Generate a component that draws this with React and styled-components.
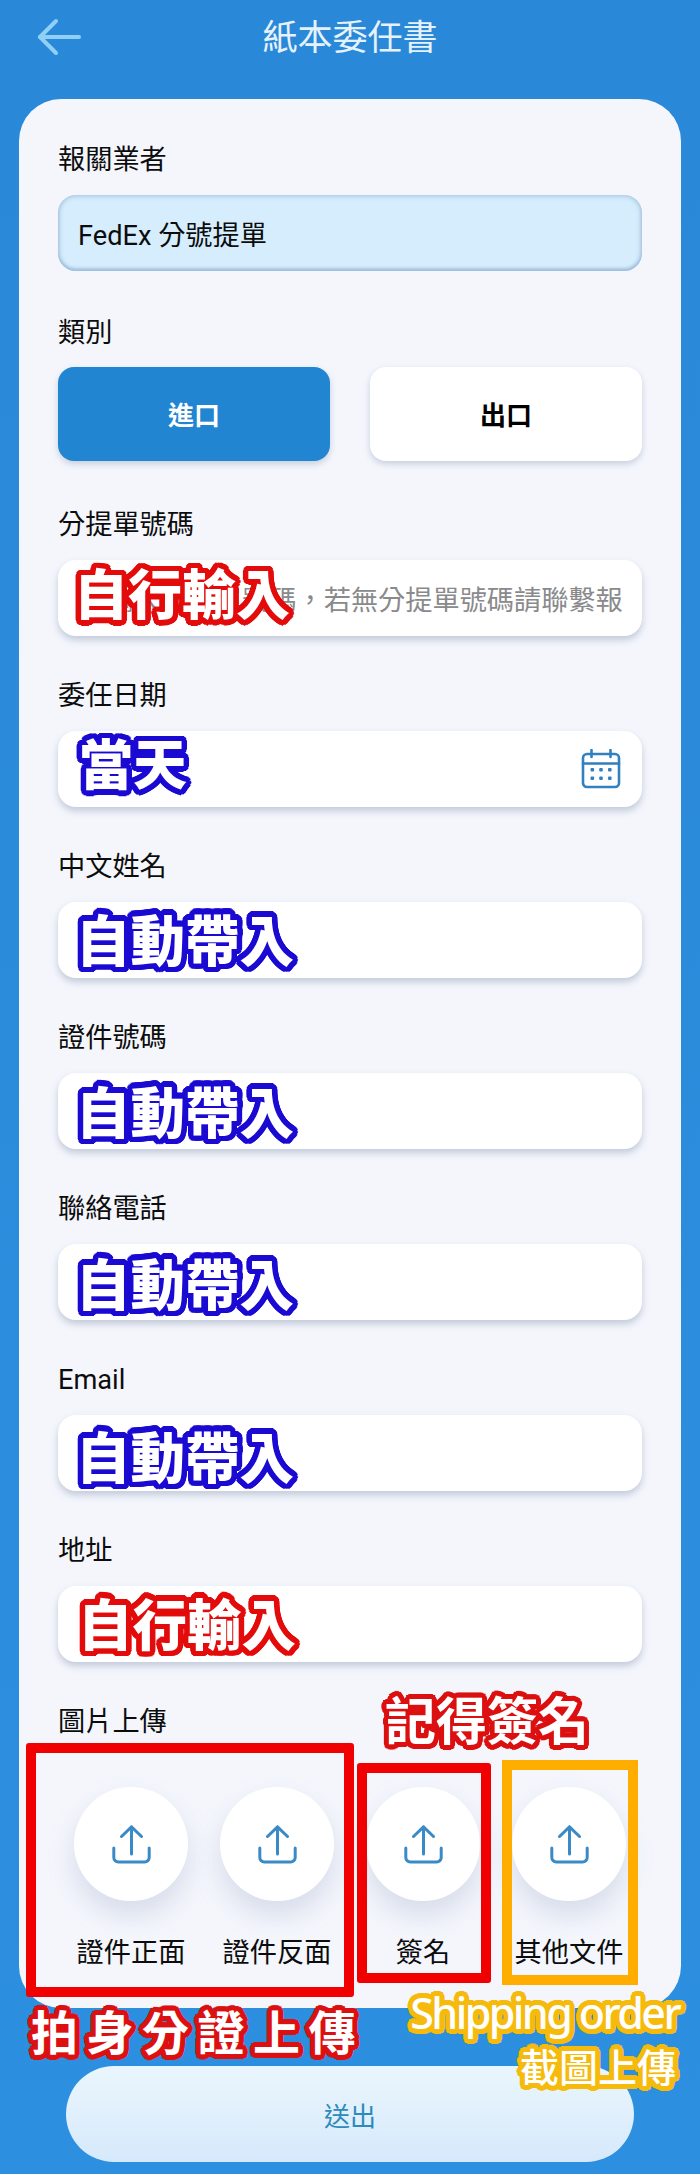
import React from "react";
import styled, { createGlobalStyle } from "styled-components";

const GlobalStyle = createGlobalStyle`
	html, body {
		margin: 0;
		padding: 0;
		background: #2a8adb;
	}
	* {
		box-sizing: border-box;
	}
`;

// rounded outline round a text, -webkit-text-stroke leaves sharp spikes on the corners
const outline = (color, radius) => {
	const shadows = [];
	for (let r = radius; r > 0; r -= 2) {
		for (let i = 0; i < 24; i++) {
			const a = (i / 24) * Math.PI * 2;
			shadows.push(`${(Math.cos(a) * r).toFixed(2)}px ${(Math.sin(a) * r).toFixed(2)}px 0 ${color}`);
		}
	}
	return shadows.join(",");
};

const UploadIcon = () => (
	<svg width="39" height="39" viewBox="0 0 39 39" fill="none" stroke="#3a8ac8" strokeWidth="3" strokeLinecap="round" strokeLinejoin="round">
		<path d="M19.5 29V2" />
		<path d="M9.5 11.5L19.5 1.8L29.5 11.5" />
		<path d="M1.8 23v9.5a4.5 4.5 0 0 0 4.5 4.5h26.4a4.5 4.5 0 0 0 4.5-4.5V23" />
	</svg>
);

const CalendarIcon = () => (
	<svg width="40" height="40" viewBox="0 0 40 40" fill="none" stroke="#3180bf" strokeWidth="2.6" strokeLinecap="round">
		<rect x="2" y="5" width="36" height="33" rx="4" />
		<path d="M2 14.5h36" />
		<path d="M10.5 1v7M29.5 1v7" />
		<g fill="#3180bf" stroke="none">
			<rect x="9.5" y="19" width="3.6" height="3.6" rx="1" />
			<rect x="18.2" y="19" width="3.6" height="3.6" rx="1" />
			<rect x="27" y="19" width="3.6" height="3.6" rx="1" />
			<rect x="9.5" y="27.5" width="3.6" height="3.6" rx="1" />
			<rect x="18.2" y="27.5" width="3.6" height="3.6" rx="1" />
			<rect x="27" y="27.5" width="3.6" height="3.6" rx="1" />
		</g>
	</svg>
);

const App = () => {
	return (
		<Page>
			<GlobalStyle />
			<Header>
				<BackButton>
					<svg width="44" height="38" viewBox="0 0 44 38" fill="none" stroke="#90d0f6" strokeWidth="4" strokeLinecap="round" strokeLinejoin="round">
						<path d="M3 19h39" />
						<path d="M19 3L3 19L19 35" />
					</svg>
				</BackButton>
				<Title>紙本委任書</Title>
			</Header>
			<Card>
				<Field $gap={41}>
					<Label>報關業者</Label>
					<SelectBox>FedEx 分號提單</SelectBox>
				</Field>
				<Field $gap={43}>
					<Label $tight>類別</Label>
					<TypeRow>
						<TypeButton $active>進口</TypeButton>
						<TypeButton>出口</TypeButton>
					</TypeRow>
				</Field>
				<Field>
					<Label>分提單號碼</Label>
					<InputBox $muted>
						請輸入分提單號碼，若無分提單號碼請聯繫報
						<Stamp $color="#e30b0b" $x={16} $y={-1} $size={54}>自行輸入</Stamp>
					</InputBox>
				</Field>
				<Field>
					<Label>委任日期</Label>
					<InputBox>
						<Stamp $color="#1a0ad2" $size={54} $x={21} $y={-2}>當天</Stamp>
						<CalendarSlot><CalendarIcon /></CalendarSlot>
					</InputBox>
				</Field>
				<Field>
					<Label>中文姓名</Label>
					<InputBox><Stamp $color="#1a0ad2" $y={2}>自動帶入</Stamp></InputBox>
				</Field>
				<Field>
					<Label>證件號碼</Label>
					<InputBox><Stamp $color="#1a0ad2" $y={3}>自動帶入</Stamp></InputBox>
				</Field>
				<Field>
					<Label>聯絡電話</Label>
					<InputBox><Stamp $color="#1a0ad2" $y={4}>自動帶入</Stamp></InputBox>
				</Field>
				<Field>
					<Label>Email</Label>
					<InputBox><Stamp $color="#1a0ad2" $y={6}>自動帶入</Stamp></InputBox>
				</Field>
				<Field>
					<Label>地址</Label>
					<InputBox><Stamp $color="#e30b0b" $x={20} $y={2}>自行輸入</Stamp></InputBox>
				</Field>
				<Label>圖片上傳</Label>
				<UploadGrid>
					<UploadItem>
						<UploadCircle><UploadIcon /></UploadCircle>
						<UploadName>證件正面</UploadName>
					</UploadItem>
					<UploadItem>
						<UploadCircle><UploadIcon /></UploadCircle>
						<UploadName>證件反面</UploadName>
					</UploadItem>
					<UploadItem>
						<UploadCircle><UploadIcon /></UploadCircle>
						<UploadName>簽名</UploadName>
					</UploadItem>
					<UploadItem>
						<UploadCircle><UploadIcon /></UploadCircle>
						<UploadName>其他文件</UploadName>
					</UploadItem>
				</UploadGrid>
			</Card>
			<SubmitButton>送出</SubmitButton>

			<IdFrame />
			<SignFrame />
			<OrderFrame />
			<SignNote>記得簽名</SignNote>
			<IdNote>拍身分證上傳</IdNote>
			<OrderNote>Shipping order</OrderNote>
			<ShotNote>截圖上傳</ShotNote>
		</Page>
	);
};

const Page = styled.div`
	position: relative;
	width: 700px;
	height: 2174px;
	overflow: hidden;
	background: linear-gradient(#2a88d8, #2d8fe0);
	font-family: Roboto, "Noto Sans CJK TC", sans-serif;
	color: #0c0c0c;
`;

const Header = styled.header`
	position: relative;
	height: 99px;
	display: flex;
	justify-content: center;
	padding-top: 14px;
`;

const BackButton = styled.div`
	position: absolute;
	left: 37px;
	top: 18px;
	line-height: 0;
`;

const Title = styled.h1`
	margin: 0;
	font-size: 35px;
	line-height: 50px;
	font-weight: 400;
	color: #e6f2fb;
`;

const Card = styled.main`
	margin: 0 19px;
	padding: 40px 39px 37px;
	height: 1909px;
	background: #f4f6fc;
	border-radius: 42px;
`;

const Field = styled.section`
	margin-bottom: ${(p) => p.$gap ?? 39}px;
`;

const Label = styled.div`
	font-size: 27.2px;
	line-height: 38px;
	padding-top: 2px;
	height: 38px;
	margin-bottom: ${(p) => (p.$tight ? 17 : 18)}px;
`;

const InputBox = styled.div`
	position: relative;
	height: 76px;
	padding: 0 21px;
	display: flex;
	align-items: center;
	font-size: 27.2px;
	white-space: nowrap;
	background: #fff;
	border-radius: 18px;
	color: ${(p) => (p.$muted ? "#8a8a8c" : "#0c0c0c")};
	box-shadow: 0 4px 7px rgba(120, 135, 165, 0.4);
`;

const SelectBox = styled(InputBox)`
	padding: 0 20px;
	background: #d6edfd;
	color: #0c0c0c;
	box-shadow: inset 0 0 5px 1px #a2c2de, inset 0 -2px 3px #9dbbd8;
`;

const Stamp = styled.span`
	position: absolute;
	left: ${(p) => p.$x ?? 18}px;
	top: calc(50% + ${(p) => p.$y ?? 0}px);
	transform: translateY(-50%);
	font-size: ${(p) => p.$size ?? 54.5}px;
	line-height: 1;
	font-weight: 900;
	color: #fff;
	text-shadow: ${(p) => outline(p.$color, 5.5)};
`;

const CalendarSlot = styled.div`
	margin-left: auto;
	line-height: 0;
`;

const TypeRow = styled.div`
	display: grid;
	grid-template-columns: 272px 272px;
	justify-content: space-between;
`;

const TypeButton = styled.button`
	height: 94px;
	padding: 0 0 2px;
	border: 0;
	border-radius: 16px;
	font-family: inherit;
	font-size: 26px;
	font-weight: 700;
	background: ${(p) => (p.$active ? "#2285d2" : "#fff")};
	color: ${(p) => (p.$active ? "#fff" : "#000")};
	box-shadow: 0 3px 6px rgba(120, 135, 165, 0.35);
`;

const UploadGrid = styled.div`
	display: grid;
	grid-template-columns: repeat(4, 1fr);
	margin-top: 48px;
`;

const UploadItem = styled.div`
	display: flex;
	flex-direction: column;
	align-items: center;
	gap: 33px;
`;

const UploadCircle = styled.div`
	width: 114px;
	height: 114px;
	border-radius: 50%;
	background: #fff;
	display: flex;
	align-items: center;
	justify-content: center;
	box-shadow: 0 14px 26px rgba(140, 155, 190, 0.28);
`;

const UploadName = styled.div`
	font-size: 27.2px;
	line-height: 38px;
	white-space: nowrap;
`;

const SubmitButton = styled.button`
	display: block;
	width: 568px;
	height: 96px;
	margin: 58px 0 0 66px;
	border: 0;
	border-radius: 48px;
	background: linear-gradient(#eaf6fd, #d6e9fb);
	font-family: inherit;
	font-size: 26px;
	color: #2c8abd;
`;

/* marks painted over the screenshot */
const Frame = styled.div`
	position: absolute;
	border: 10px solid ${(p) => p.$color ?? "#f00000"};
	border-radius: 3px;
`;

const IdFrame = styled(Frame)`
	left: 26px;
	top: 1743px;
	width: 328px;
	height: 254px;
`;

const SignFrame = styled(Frame)`
	left: 357px;
	top: 1763px;
	width: 134px;
	height: 220px;
`;

const OrderFrame = styled(Frame).attrs({ $color: "#ffae00" })`
	left: 502px;
	top: 1760px;
	width: 136px;
	height: 225px;
	border-radius: 0;
`;

const Note = styled.div`
	position: absolute;
	line-height: 1;
	font-weight: 700;
	white-space: nowrap;
	color: #fff;
`;

const SignNote = styled(Note)`
	left: 385px;
	top: 1697px;
	font-size: 51px;
	text-shadow: ${outline("#dc1010", 5)};
`;

const IdNote = styled(Note)`
	left: 31px;
	top: 2010px;
	font-size: 47px;
	letter-spacing: 8.5px;
	text-shadow: ${outline("#dc1010", 5)};
`;

const OrderNote = styled(Note)`
	right: 21px;
	top: 1991px;
	font-family: "Noto Sans", sans-serif;
	font-size: 43px;
	font-weight: 500;
	letter-spacing: -2.6px;
	text-shadow: ${outline("#f6ba0c", 5)};
`;

const ShotNote = styled(Note)`
	right: 24px;
	top: 2050px;
	font-size: 39px;
	font-weight: 500;
	text-shadow: ${outline("#f6ba0c", 5)};
`;

export default App;
